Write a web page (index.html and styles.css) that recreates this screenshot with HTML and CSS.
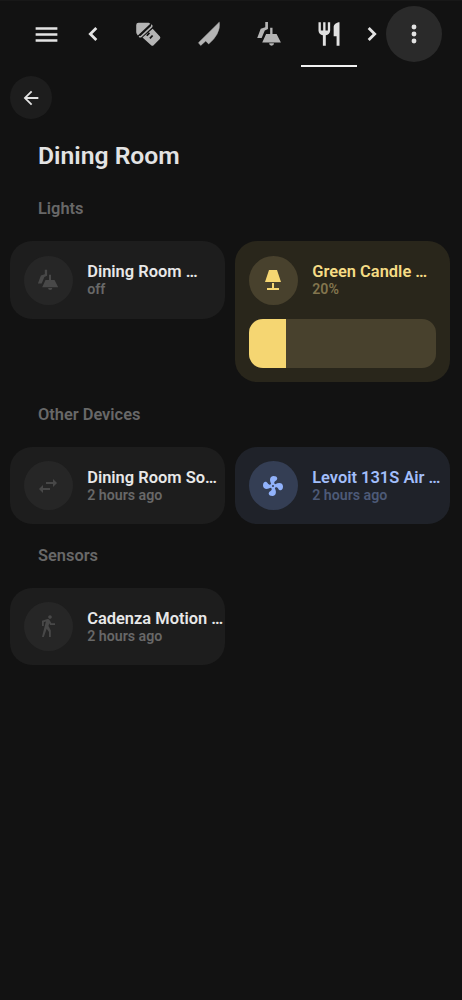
FILE: index.html
```html
<!DOCTYPE html>
<html lang="en">
<head>
<meta charset="utf-8">
<meta name="viewport" content="width=device-width, initial-scale=1">
<title>Dining Room</title>
<link rel="stylesheet" href="styles.css">
</head>
<body>
<svg class="defs" aria-hidden="true">
  <symbol id="pendants" viewBox="0 0 24 24">
    <path d="M8.800 1.700h2.300v6L8.400 8.900 5.700 15.400H1.900L4.900 7.600 8.800 6.200zM13 6.700h2v5.200h3.500l3.700 7.300H6.200l3.300-7.300H13zM12.100 20h4.200a2.100 2.100 0 0 1-4.200 0z"/>
  </symbol>
</svg>
<header class="bar">
  <button class="nav menu" aria-label="Menu"><svg viewBox="0 0 24 24"><path d="M3 6h18v2H3zm0 5h18v2H3zm0 5h18v2H3z"/></svg></button>
  <button class="nav prev" aria-label="Previous"><svg viewBox="0 0 24 24"><path d="M15.7 16.3 11.4 12l4.3-4.3L14 6l-6 6 6 6z"/></svg></button>
  <nav class="tabs">
    <a class="tab"><svg viewBox="0 0 24 24"><path fill-rule="evenodd" d="M1.900 4.300Q1.900 2.300 3.900 2.300H12.600L14 3.300 3.300 13.300Q1.900 11.800 1.900 10.500zM15.200 3.700q1.100.9.600 2.300L6.400 14.800q-1.300.7-2.400-.5l.7-.8q.6.500 1.100 0L14.500 5.300q.4-.4 0-.9zM16 7.400l6.200 6.700q.9 1.100-.1 2.100L16.800 21.600q-1 .9-2.100 0L7.300 15.100zM12.700 10.600l-2.300 2.400 1.100 1 2.300-2.400zM15.400 12.800l-2.300 2.400 1.100 1 2.300-2.400z"/></svg></a>
    <a class="tab"><svg viewBox="0 0 24 24"><path d="M20.800 1.900Q21.600 7 18.800 12.200 16.200 17 11.700 20.500L9.200 17.900 4.900 21.800 3 19.500z" stroke="currentColor" stroke-width=".5" stroke-linejoin="round"/></svg></a>
    <a class="tab"><svg><use href="#pendants"/></svg></a>
    <a class="tab active"><svg viewBox="0 0 24 24"><path d="M11 9H9V2H7v7H5V2H3v7c0 2.120 1.660 3.840 3.750 3.970V22h2.500v-9.030C11.340 12.840 13 11.120 13 9V2h-2zm5-3v8h2.500v8H21V2c-2.760 0-5 2.240-5 4z"/></svg></a>
  </nav>
  <button class="nav next" aria-label="Next"><svg viewBox="0 0 24 24"><path d="M8.300 16.300l4.300-4.300-4.300-4.300L10 6l6 6-6 6z"/></svg></button>
  <button class="more" aria-label="More"><svg viewBox="0 0 24 24"><circle cx="12" cy="6" r="2.100"/><circle cx="12" cy="12" r="2.100"/><circle cx="12" cy="18" r="2.100"/></svg></button>
</header>
<main class="view">
  <button class="back" aria-label="Back"><svg viewBox="0 0 24 24"><path d="M20 11H7.800l5.600-5.600L12 4l-8 8 8 8 1.400-1.400L7.800 13H20z"/></svg></button>
  <h1 class="title">Dining Room</h1>

  <h2 class="section lights">Lights</h2>
  <div class="grid">
    <article class="card">
      <div class="row">
        <span class="shape"><svg><use href="#pendants"/></svg></span>
        <div class="info"><div class="name">Dining Room …</div><div class="state">off</div></div>
      </div>
    </article>
    <article class="card yellow">
      <div class="row">
        <span class="shape"><svg viewBox="0 0 24 24"><path d="M8 2h8l4 12H4zM11 15h2v5h5v2H6v-2h5z"/></svg></span>
        <div class="info"><div class="name">Green Candle …</div><div class="state">20%</div></div>
      </div>
      <div class="slider"><div class="fill" style="width:20%"></div></div>
    </article>
  </div>

  <h2 class="section">Other Devices</h2>
  <div class="grid">
    <article class="card short">
      <div class="row">
        <span class="shape"><svg viewBox="0 0 24 24"><path d="M21 9l-4-4v3h-7v2h7v3zM7 11l-4 4 4 4v-3h7v-2H7z"/></svg></span>
        <div class="info"><div class="name">Dining Room So…</div><div class="state">2 hours ago</div></div>
      </div>
    </article>
    <article class="card short blue">
      <div class="row">
        <span class="shape"><svg viewBox="0 0 24 24"><path d="M12 11a1 1 0 0 0-1 1 1 1 0 0 0 1 1 1 1 0 0 0 1-1 1 1 0 0 0-1-1m.5-9C17 2 17.100 5.570 14.730 6.750c-.99.490-1.430 1.540-1.620 2.470.480.200.900.510 1.220.910 3.700-2 7.670-1.210 7.670 2.370 0 4.500-3.570 4.600-4.750 2.230-.5-.99-1.560-1.430-2.490-1.620-.2.480-.51.890-.91 1.230 1.990 3.690 1.200 7.660-2.380 7.660-4.470 0-4.590-3.580-2.220-4.760.980-.490 1.420-1.530 1.620-2.450-.49-.2-.92-.52-1.240-.92C5.960 15.850 2 15.070 2 11.500 2 7 5.560 6.890 6.740 9.260c.5.990 1.550 1.420 2.480 1.610.190-.48.510-.9.920-1.220C8.150 5.960 8.940 2 12.500 2z"/></svg></span>
        <div class="info"><div class="name">Levoit 131S Air …</div><div class="state">2 hours ago</div></div>
      </div>
    </article>
  </div>

  <h2 class="section sensors">Sensors</h2>
  <div class="grid">
    <article class="card short">
      <div class="row">
        <span class="shape"><svg viewBox="0 0 24 24"><path d="M14.120 10H19V8.200h-3.620l-2-3.330c-.3-.5-.9-.87-1.500-.87-.2 0-.3 0-.5.100L6 5.800V11h1.800V7.330l2.100-.73L6 22h1.800l2.900-8.130L13 17v5h1.800v-6.410l-2.300-4.540.7-2.800M14 3.800c1 0 1.800-.8 1.800-1.800S15 .2 14 .2 12.200 1 12.200 2s.8 1.800 1.800 1.800z"/></svg></span>
        <div class="info"><div class="name">Cadenza Motion …</div><div class="state">2 hours ago</div></div>
      </div>
    </article>
  </div>
</main>
</body>
</html>
```
FILE: styles.css
```css
* { box-sizing: border-box; }
body {
  margin: 0;
  min-height: 1000px;
  background: #121212;
  color: #e3e3e3;
  font-family: Roboto, "Liberation Sans", sans-serif;
  overflow-x: hidden;
}
svg { display: block; fill: currentColor; }
.defs { display: none; }
button { border: 0; padding: 0; background: none; color: inherit; }

.bar {
  display: flex;
  align-items: center;
  height: 68px;
  padding: 0 20px 0 31.500px;
  box-shadow: inset 0 1px #181818;
}
.nav svg { width: 28px; height: 28px; }
.nav.menu svg { width: 29px; height: 29px; }
.nav.prev { margin-left: 18px; }
.tabs { display: flex; margin-left: 11.600px; height: 68px; }
.tab {
  display: flex;
  align-items: center;
  justify-content: center;
  width: 60.300px;
  color: #b5b5b5;
}
.tab svg { width: 28px; height: 28px; }
.tab.active {
  width: 56px;
  margin: 0 0 1px 2px;
  padding-top: 3px;
  border-bottom: 2px solid #f1f1f1;
  color: #e1e1e1;
}
.next { margin-left: .800px; }
.more {
  display: grid;
  place-items: center;
  width: 56px;
  height: 56px;
  margin-left: auto;
  border-radius: 50%;
  background: #2a2a2a;
}
.more svg { width: 28px; height: 28px; }

.view { padding: 8px 12px 0 9.600px; }
.back {
  display: grid;
  place-items: center;
  width: 42px;
  height: 43px;
  border-radius: 50%;
  background: #1d1d1d;
}
.back svg { width: 22px; height: 22px; }
.title {
  margin: 21px 0 0 28.400px;
  font-size: 24.700px;
  font-weight: 600;
  line-height: 32px;
}
.section {
  margin: 20px 0 19px 28.400px;
  color: #686868;
  font-size: 16.400px;
  font-weight: 600;
  line-height: 26px;
}
.section.lights { margin-top: 24px; }
.section.sensors { margin-top: 19px; }

.grid {
  display: grid;
  grid-template-columns: repeat(2, 215.200px);
  gap: 9.800px;
  align-items: start;
}
.card {
  height: 78px;
  padding: 14px;
  border-radius: 22px;
  background: #1d1d1d;
  --shape: #262626;
  --icon: #484848;
  --name: #e8e8e8;
  --state: #686868;
}
.card.short { height: 77px; }
.card.yellow {
  height: 141px;
  background: #29261b;
  --shape: #48412d;
  --icon: #f5d672;
  --name: #f5dc85;
  --state: #82754e;
}
.card.blue {
  background: #1f2229;
  --shape: #343e54;
  --icon: #91b2fb;
  --name: #a2befa;
  --state: #4d5a77;
}
.row { display: flex; align-items: center; height: 50px; }
.short .row { height: 49px; }
.shape {
  display: grid;
  place-items: center;
  flex: none;
  width: 49px;
  height: 49px;
  border-radius: 50%;
  background: var(--shape);
  color: var(--icon);
}
.shape svg { width: 24px; height: 24px; }
.info { margin-left: 14.600px; white-space: nowrap; }
.name {
  color: var(--name);
  font-size: 16.450px;
  font-weight: 600;
  line-height: 19px;
}
.state {
  color: var(--state);
  font-size: 14.200px;
  font-weight: 600;
  line-height: 17px;
}
.slider {
  width: 187px;
  height: 49px;
  margin-top: 14px;
  border-radius: 14px;
  overflow: hidden;
  background: #48412d;
}
.fill { height: 100%; background: #f5d672; }
```
